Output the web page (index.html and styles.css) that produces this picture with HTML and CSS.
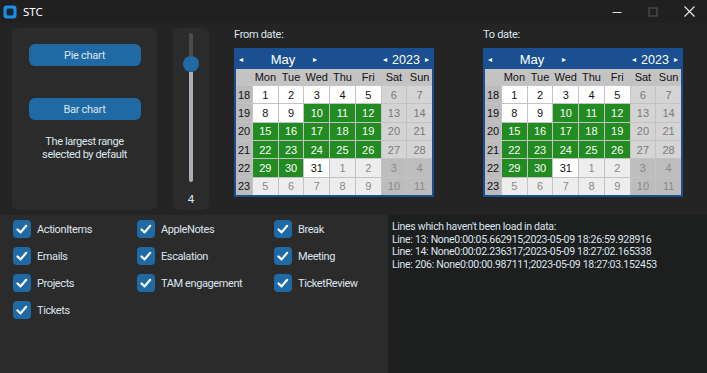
FILE: index.html
```html
<html lang="en">
<head>
    <meta charset="UTF-8">
    <title>STC</title>
    <link rel="stylesheet" href="styles.css">
</head>
<body>
    <div class="titlebar">
        <svg class="app-icon" width="14" height="14" viewBox="0 0 14 14">
            <rect x="0.5" y="0.5" width="13" height="13" rx="3" fill="#1b8fe3"/>
            <rect x="3.5" y="3.5" width="7" height="7" rx="1.5" fill="#16263b"/>
        </svg>
        <span class="app-title">STC</span>
        <div class="win-controls">
            <span class="win-btn">
                <svg width="10" height="10" viewBox="0 0 10 10"><line x1="0.5" y1="5.5" x2="9.5" y2="5.5" stroke="#e0e0e0" stroke-width="1"/></svg>
            </span>
            <span class="win-btn">
                <svg width="10" height="10" viewBox="0 0 10 10"><rect x="1" y="1" width="8" height="8" fill="none" stroke="#585858" stroke-width="1"/></svg>
            </span>
            <span class="win-btn">
                <svg width="11" height="11" viewBox="0 0 11 11"><path d="M0.5 0.5 L10.5 10.5 M10.5 0.5 L0.5 10.5" stroke="#ececec" stroke-width="1.1"/></svg>
            </span>
        </div>
    </div>

    <div class="top">
        <div class="frame charts">
            <button class="btn">Pie chart</button>
            <button class="btn btn-bar">Bar chart</button>
            <div class="hint">The largest range<br>selected by default</div>
        </div>

        <div class="frame slider-frame">
            <div class="slider">
                <div class="track-empty"></div>
                <div class="knob"></div>
                <div class="track-fill"></div>
            </div>
            <div class="slider-value">4</div>
        </div>

        <div class="date-block">
            <div class="date-label">From date:</div>
            <div class="calendar" data-cal></div>
        </div>

        <div class="date-block date-to">
            <div class="date-label">To date:</div>
            <div class="calendar" data-cal></div>
        </div>
    </div>

    <div class="bottom">
        <div class="checks">
            <label class="check"><span class="box"></span>ActionItems</label>
            <label class="check"><span class="box"></span>AppleNotes</label>
            <label class="check"><span class="box"></span>Break</label>
            <label class="check"><span class="box"></span>Emails</label>
            <label class="check"><span class="box"></span>Escalation</label>
            <label class="check"><span class="box"></span>Meeting</label>
            <label class="check"><span class="box"></span>Projects</label>
            <label class="check"><span class="box"></span>TAM engagement</label>
            <label class="check"><span class="box"></span>TicketReview</label>
            <label class="check"><span class="box"></span>Tickets</label>
        </div>
        <div class="log">
            <div>Lines which haven't been load in data:</div>
            <div>Line: 13: None0:00:05.662915;2023-05-09 18:26:59.928916</div>
            <div>Line: 14: None0:00:02.236317;2023-05-09 18:27:02.165338</div>
            <div>Line: 206: None0:00:00.987111;2023-05-09 18:27:03.152453</div>
        </div>
    </div>

    <script>
        const checkSvg = '<svg width="18" height="18" viewBox="0 0 18 18"><polyline points="4.5,9.5 7.6,12.4 13.2,5.8" fill="none" stroke="#ffffff" stroke-width="2.2" stroke-linecap="round" stroke-linejoin="round"/></svg>';
        document.querySelectorAll('.box').forEach(box => box.innerHTML = checkSvg);

        const weekdays = ['Mon', 'Tue', 'Wed', 'Thu', 'Fri', 'Sat', 'Sun'];
        const weeks = [18, 19, 20, 21, 22, 23];

        // selected range: 10th to 30th of May
        function buildCalendar(cal) {
            let html = '<div class="cal-head">' +
                '<span class="arrow">&#9666;</span><span class="cal-month">May</span><span class="arrow">&#9656;</span>' +
                '<span class="cal-spacer"></span>' +
                '<span class="arrow">&#9666;</span><span class="cal-year">2023</span><span class="arrow">&#9656;</span>' +
                '</div><div class="cal-grid"><div class="cal-corner"></div>';

            weekdays.forEach(day => html += `<div class="cal-wd">${day}</div>`);

            weeks.forEach((week, row) => {
                html += `<div class="cal-wk">${week}</div>`;
                for (let col = 0; col < 7; col++) {
                    const n = row * 7 + col + 1;
                    const other = n > 31;
                    const day = other ? n - 31 : n;
                    const weekend = col > 4;
                    let cls = 'day';
                    if (other) cls += weekend ? ' om-we' : ' om';
                    else if (weekend) cls += ' we';
                    else if (day >= 10 && day <= 30) cls += ' sel';
                    html += `<div class="${cls}">${day}</div>`;
                }
            });

            cal.innerHTML = html + '</div>';
        }

        document.querySelectorAll('[data-cal]').forEach(buildCalendar);
    </script>
</body>
</html>
```

FILE: styles.css
```css
body {
    margin: 0;
    width: 707px;
    height: 373px;
    overflow: hidden;
    background-color: #242424;
    color: #dce4ee;
    font-family: Roboto, "Noto Sans", sans-serif;
}
.titlebar {
    display: flex;
    align-items: center;
    height: 23px;
    background-color: #202020;
}
.app-icon {
    margin-left: 3px;
}
.app-title {
    margin-left: 6px;
    font-family: "Noto Sans", sans-serif;
    font-size: 11.5px;
    color: #ffffff;
}
.win-controls {
    display: flex;
    margin-left: auto;
    height: 100%;
}
.win-btn {
    display: flex;
    justify-content: center;
    align-items: center;
    width: 36px;
}
.top {
    display: flex;
    box-sizing: border-box;
    height: 192px;
    padding-top: 5px;
}
.frame {
    background-color: #2b2b2b;
    border-radius: 6px;
    height: 182px;
}
.charts {
    display: flex;
    flex-direction: column;
    align-items: center;
    box-sizing: border-box;
    width: 145px;
    margin-left: 12px;
    padding-top: 16px;
}
.btn {
    width: 112px;
    height: 22px;
    padding: 0;
    border: none;
    border-radius: 6px;
    background-color: #1f6aa5;
    color: #dce4ee;
    font-family: Roboto, sans-serif;
    font-size: 11px;
    letter-spacing: -0.3px;
}
.btn-bar {
    margin-top: 32px;
}
.hint {
    margin-top: 16px;
    font-size: 11px;
    letter-spacing: -0.4px;
    line-height: 12.5px;
    text-align: center;
}
.slider-frame {
    display: flex;
    flex-direction: column;
    align-items: center;
    box-sizing: border-box;
    width: 36px;
    margin-left: 16px;
    padding-top: 5px;
}
.slider {
    display: flex;
    flex-direction: column;
    align-items: center;
}
.track-empty {
    width: 4px;
    height: 23px;
    background-color: #4a4d50;
    border-radius: 2px 2px 0 0;
}
.knob {
    width: 16px;
    height: 16px;
    border-radius: 50%;
    background-color: #1f6aa5;
}
.track-fill {
    width: 4px;
    height: 110px;
    background-color: #aab0b5;
    border-radius: 0 0 2px 2px;
}
.slider-value {
    margin-top: 10px;
    font-size: 11.5px;
    line-height: 14px;
}
.date-block {
    margin-left: 25px;
}
.date-to {
    margin-left: 49px;
}
.date-label {
    font-size: 11px;
    letter-spacing: -0.3px;
    line-height: 14px;
}
.calendar {
    box-sizing: border-box;
    width: 200px;
    height: 149px;
    margin-top: 6px;
    padding: 2px;
    background-color: #1a4f91;
    font-family: "Liberation Sans", Arial, sans-serif;
}
.cal-head {
    display: flex;
    align-items: center;
    height: 19px;
    color: #ffffff;
}
.arrow {
    width: 10px;
    text-align: center;
    font-family: "DejaVu Sans", sans-serif;
    font-size: 8px;
}
.cal-month {
    box-sizing: border-box;
    width: 64px;
    padding-left: 10px;
    text-align: center;
    font-size: 13px;
}
.cal-year {
    width: 32px;
    text-align: center;
    font-size: 12.5px;
}
.cal-spacer {
    flex: 1;
}
.cal-grid {
    display: grid;
    grid-template-columns: 16px repeat(7, 1fr);
    grid-template-rows: 16px repeat(6, 1fr);
    gap: 1px;
    height: 126px;
    background-color: #c3c3c3;
    font-size: 11px;
}
.cal-wd,
.cal-wk,
.day {
    display: flex;
    justify-content: center;
    align-items: center;
    color: #111111;
}
.cal-wk {
    background-color: #bcbcbc;
}
.day {
    background-color: #ffffff;
}
.day.sel {
    background-color: #228b22;
    color: #ffffff;
}
.day.we {
    background-color: #d4d4d4;
    color: #7a7a7a;
}
.day.om {
    background-color: #ededed;
    color: #8a8a8a;
}
.day.om-we {
    background-color: #bdbdbd;
    color: #8a8a8a;
}
.bottom {
    display: flex;
    height: 158px;
}
.checks {
    display: grid;
    grid-template-columns: 124px 137px auto;
    grid-auto-rows: 18px;
    row-gap: 9px;
    align-content: start;
    box-sizing: border-box;
    width: 388px;
    padding: 5px 0 0 13px;
    background-color: #2b2b2b;
}
.check {
    display: flex;
    align-items: center;
    gap: 6px;
    font-size: 11px;
    letter-spacing: -0.4px;
}
.box {
    display: block;
    width: 18px;
    height: 18px;
    border-radius: 4px;
    background-color: #1f6aa5;
}
.box svg {
    display: block;
}
.log {
    flex: 1;
    padding: 6px 4px;
    background-color: #1d1e1e;
    font-size: 10.5px;
    letter-spacing: -0.3px;
    line-height: 12.5px;
}
```
